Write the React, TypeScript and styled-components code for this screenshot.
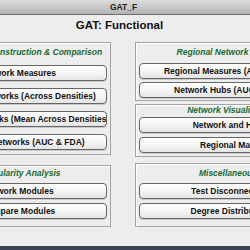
import React from "react";
import styled, { createGlobalStyle } from "styled-components";

const Global = createGlobalStyle`
  html, body { margin: 0; padding: 0; background: #3b4354; overflow: hidden; }
  body { width: 250px; height: 250px; font-family: "Liberation Sans", Arial, sans-serif; }
`;

const Window = styled.div`
  margin-left: -78px;
  width: 407px;
  height: 246px;
  background: #ededed;
  display: flex;
  flex-direction: column;
`;

const TitleBar = styled.div`
  height: 14px;
  border-bottom: 1px solid #6a6a6a;
  background: linear-gradient(#dcdcdc, #b4b4b4);
  display: flex;
  align-items: center;
  justify-content: center;
  font-size: 8.5px;
  font-weight: bold;
  color: #222;
  padding-right: 4px;
`;

const Heading = styled.div`
  height: 27px;
  line-height: 20px;
  text-align: center;
  font-size: 11.5px;
  font-weight: bold;
  color: #111;
  padding-right: 12px;
`;

const Columns = styled.div`
  display: grid;
  grid-template-columns: 185px 190px;
  column-gap: 24px;
  padding: 0 4px;
`;

const Column = styled.div`
  display: flex;
  flex-direction: column;
`;

const Panel = styled.div<{ $mt?: number; $pt: number; $hg: number; $gap: number; $pb: number }>`
  margin-top: ${(p) => p.$mt ?? 0}px;
  padding: ${(p) => p.$pt}px 4px ${(p) => p.$pb}px;
  display: flex;
  flex-direction: column;
  box-shadow: inset 0 0 0 1px #a4a4a4, inset 1px 1px 0 1px #ffffff;
  & > button + button { margin-top: ${(p) => p.$gap}px; }
  & > div { margin-bottom: ${(p) => p.$hg}px; }
`;

const PanelTitle = styled.div<{ $shift?: number }>`
  height: 12px;
  line-height: 12px;
  text-align: center;
  font-size: 8.5px;
  font-weight: bold;
  font-style: italic;
  color: #186a2e;
  white-space: nowrap;
  padding-left: ${(p) => Math.max(0, p.$shift ?? 0)}px;
  padding-right: ${(p) => Math.max(0, -(p.$shift ?? 0))}px;
`;

const Button = styled.button`
  height: 16px;
  margin: 0;
  padding: 0;
  border: 1px solid #666;
  border-radius: 4px;
  background: linear-gradient(#ffffff, #f2f2f2 60%, #e4e4e4);
  box-shadow: 0 1px 0 rgba(0,0,0,0.15);
  font-family: "Liberation Sans", Arial, sans-serif;
  font-size: 8.5px;
  font-weight: bold;
  color: #111;
  white-space: nowrap;
  overflow: hidden;
  text-align: center;
`;

export default function App() {
  return (
    <>
      <Global />
      <Window>
        <TitleBar>GAT_F</TitleBar>
        <Heading>GAT: Functional</Heading>
        <Columns>
          <Column>
            <Panel $pt={4} $hg={7} $gap={7} $pb={5}>
              <PanelTitle $shift={18}>Network Construction &amp; Comparison</PanelTitle>
              <Button>Network Measures</Button>
              <Button>Compare Networks (Across Densities)</Button>
              <Button>Compare Networks (Mean Across Densities)</Button>
              <Button>Compare Networks (AUC &amp; FDA)</Button>
            </Panel>
            <Panel $mt={10} $pt={2} $hg={4} $gap={4} $pb={8}>
              <PanelTitle $shift={4}>Modularity Analysis</PanelTitle>
              <Button>Network Modules</Button>
              <Button>Compare Modules</Button>
            </Panel>
          </Column>
          <Column>
            <Panel $pt={4} $hg={5} $gap={3} $pb={3}>
              <PanelTitle $shift={2}>Regional Network Analysis</PanelTitle>
              <Button>Regional Measures (AUC &amp; FDA)</Button>
              <Button>Network Hubs (AUC &amp; FDA)</Button>
            </Panel>
            <Panel $mt={3} $pt={0} $hg={1} $gap={4} $pb={4}>
              <PanelTitle $shift={2}>Network Visualization</PanelTitle>
              <Button>Network and Hubs</Button>
              <Button>Regional Maps</Button>
            </Panel>
            <Panel $mt={6} $pt={4} $hg={4} $gap={4} $pb={8}>
              <PanelTitle $shift={-4}>Miscellaneous</PanelTitle>
              <Button>Test Disconnection</Button>
              <Button>Degree Distribution</Button>
            </Panel>
          </Column>
        </Columns>
      </Window>
    </>
  );
}
